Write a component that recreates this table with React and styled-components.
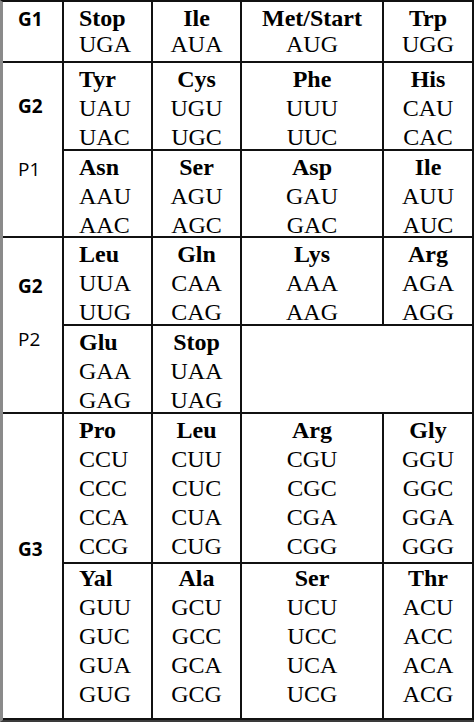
import React from 'react';
import styled, { createGlobalStyle } from 'styled-components';

const GlobalStyle = createGlobalStyle`
  html, body { margin: 0; padding: 0; background: #fff; }
  body { color: #000; }
`;

const serif = `"Liberation Serif", Tinos, "Nimbus Roman", "Nimbus Roman No9 L", FreeSerif, "Noto Serif", "DejaVu Serif", Times, "Times New Roman", serif`;

const Table = styled.div`
  display: grid;
  grid-template-columns: 61px 89px 89px 142px 90px;
  grid-template-rows: 61px 88px 87px 88px 88px 150px 156px;
  width: 474px;
  box-sizing: border-box;
  border-top: 2px solid #111;
  border-left: 3px solid #8a8a8a;
  border-bottom: 2px solid #3a3a3a;
`;

const Cell = styled.div`
  box-sizing: border-box;
  border-right: 2px solid #111;
  border-bottom: 2px solid #111;
  grid-column: ${(p) => p.$col} / span ${(p) => p.$span || 1};
  grid-row: ${(p) => p.$row} / span ${(p) => p.$rows || 1};
`;

const GroupCell = styled(Cell)`
  display: flex;
  flex-direction: column;
  padding: ${(p) => p.$top}px 0 0 15px;
  gap: ${(p) => p.$gap || 0}px;
  font-family: "Open Sans", "Liberation Sans", Arial, sans-serif;
  font-size: 19px;
  line-height: 24px;
  color: #000;
`;

const GroupName = styled.span`
  font-weight: 700;
`;

const Part = styled.span`
  font-weight: 400;
`;

const AminoCell = styled(Cell)`
  display: flex;
  flex-direction: column;
  align-items: ${(p) => (p.$left ? 'flex-start' : 'center')};
  padding: ${(p) => p.$top}px 0 0 ${(p) => (p.$left ? 15 : 0)}px;
  font-family: ${serif};
  font-size: 24px;
  line-height: ${(p) => p.$lh}px;
  color: #000;
`;

const Name = styled.span`
  font-weight: 700;
`;

const Codon = styled.span`
  font-weight: 400;
`;

const rows = [
  {
    row: 1, top: 3, lh: 26,
    cells: [['Stop', ['UGA']], ['Ile', ['AUA']], ['Met/Start', ['AUG']], ['Trp', ['UGG']]],
  },
  {
    row: 2, top: 2, lh: 29,
    cells: [['Tyr', ['UAU', 'UAC']], ['Cys', ['UGU', 'UGC']], ['Phe', ['UUU', 'UUC']], ['His', ['CAU', 'CAC']]],
  },
  {
    row: 3, top: 2, lh: 29,
    cells: [['Asn', ['AAU', 'AAC']], ['Ser', ['AGU', 'AGC']], ['Asp', ['GAU', 'GAC']], ['Ile', ['AUU', 'AUC']]],
  },
  {
    row: 4, top: 2, lh: 29,
    cells: [['Leu', ['UUA', 'UUG']], ['Gln', ['CAA', 'CAG']], ['Lys', ['AAA', 'AAG']], ['Arg', ['AGA', 'AGG']]],
  },
  {
    row: 5, top: 2, lh: 29,
    cells: [['Glu', ['GAA', 'GAG']], ['Stop', ['UAA', 'UAG']]],
  },
  {
    row: 6, top: 2, lh: 29,
    cells: [
      ['Pro', ['CCU', 'CCC', 'CCA', 'CCG']],
      ['Leu', ['CUU', 'CUC', 'CUA', 'CUG']],
      ['Arg', ['CGU', 'CGC', 'CGA', 'CGG']],
      ['Gly', ['GGU', 'GGC', 'GGA', 'GGG']],
    ],
  },
  {
    row: 7, top: 0, lh: 29,
    cells: [
      ['Yal', ['GUU', 'GUC', 'GUA', 'GUG']],
      ['Ala', ['GCU', 'GCC', 'GCA', 'GCG']],
      ['Ser', ['UCU', 'UCC', 'UCA', 'UCG']],
      ['Thr', ['ACU', 'ACC', 'ACA', 'ACG']],
    ],
  },
];

export default function App() {
  return (
    <>
      <GlobalStyle />
      <Table>
        <GroupCell $col={1} $row={1} $top={5}>
          <GroupName>G1</GroupName>
        </GroupCell>
        <GroupCell $col={1} $row={2} $rows={2} $top={31} $gap={39}>
          <GroupName>G2</GroupName>
          <Part>P1</Part>
        </GroupCell>
        <GroupCell $col={1} $row={4} $rows={2} $top={36} $gap={29}>
          <GroupName>G2</GroupName>
          <Part>P2</Part>
        </GroupCell>
        <GroupCell $col={1} $row={6} $rows={2} $top={123}>
          <GroupName>G3</GroupName>
        </GroupCell>

        {rows.map((r) =>
          r.cells.map(([name, codons], i) => (
            <AminoCell
              key={`${r.row}-${i}`}
              $col={i + 2}
              $row={r.row}
              $top={r.top}
              $lh={r.lh}
              $left={i === 0}
            >
              <Name>{name}</Name>
              {codons.map((c) => (
                <Codon key={c}>{c}</Codon>
              ))}
            </AminoCell>
          ))
        )}
        <Cell $col={4} $row={5} $span={2} />
      </Table>
    </>
  );
}
